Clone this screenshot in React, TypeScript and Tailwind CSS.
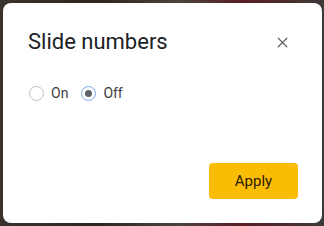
import { X } from "lucide-react";

export default function App() {
  return (
    <div className="h-[226px] w-[324px] overflow-hidden bg-[linear-gradient(90deg,#3a332c_0%,#2b2622_30%,#4a4440_55%,#5a1e22_75%,#3d3a38_100%)] p-[3px] pr-[2px]">
      <div
        className="flex h-[220px] w-[319px] flex-col rounded-[8px] bg-white"
        style={{ fontFamily: "Roboto, 'Open Sans', Arial, sans-serif" }}
      >
        <div className="flex items-center justify-between pl-[25px] pr-[31px] pt-[26px]">
          <h1 className="text-[22px] leading-[26px] text-[#202124]">
            Slide numbers
          </h1>
          <X className="h-[17px] w-[17px] text-[#5f6368]" strokeWidth={1.8} aria-hidden="true" />
        </div>

        <div className="mt-[28px] flex items-center pl-[26px] text-[14px] text-[#3c4043]">
          <label className="flex items-center">
            <span className="h-[15px] w-[15px] rounded-full border border-[#bdc1c6]" />
            <span className="ml-[7px]">On</span>
          </label>
          <label className="ml-[13px] flex items-center">
            <span className="flex h-[15px] w-[15px] items-center justify-center rounded-full border border-[#7ea6e6]">
              <span className="h-[7px] w-[7px] rounded-full bg-[#5f6368]" />
            </span>
            <span className="ml-[7px]">Off</span>
          </label>
        </div>

        <div className="mt-auto flex justify-end pb-[24px] pr-[24px]">
          <button className="h-[36px] w-[89px] rounded-[4px] bg-[#fbbc04] text-[15px] font-normal text-[#2b2000]">
            Apply
          </button>
        </div>
      </div>
    </div>
  );
}
